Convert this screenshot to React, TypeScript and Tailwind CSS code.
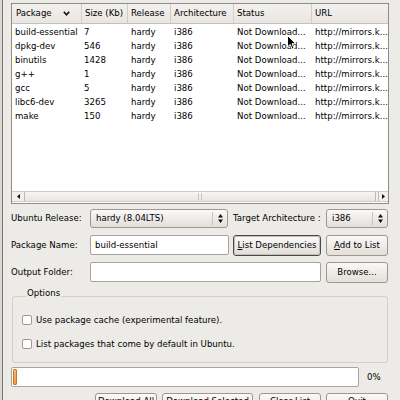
import React from "react";

const colW = ["w-[69px]", "w-[46px]", "w-[43px]", "w-[63px]", "w-[78px]", "w-[77px]"];
const headers = ["Package", "Size (Kb)", "Release", "Architecture", "Status", "URL"];
const rows: [string, string][] = [
  ["build-essential", "7"],
  ["dpkg-dev", "546"],
  ["binutils", "1428"],
  ["g++", "1"],
  ["gcc", "5"],
  ["libc6-dev", "3265"],
  ["make", "150"],
];

const face =
  "shrink-0 rounded-[3px] border border-[#9c978f] bg-linear-to-b from-[#fbfaf9] to-[#e2ded9] text-black";
const btn = `${face} flex items-center justify-center whitespace-nowrap`;
const bottomBtn = `${face} flex items-start justify-center whitespace-nowrap pt-[2px] h-[23px]`;

function UpDown() {
  return (
    <svg width="5" height="9" viewBox="0 0 5 9">
      <polygon points="2.5,0 5,3.5 0,3.5" fill="#111" />
      <polygon points="0,5.5 5,5.5 2.5,9" fill="#111" />
    </svg>
  );
}

function Combo({ text, w }: { text: string; w: string }) {
  return (
    <div className={`${face} ${w} flex h-[19px] items-center pl-[5px]`}>
      <span className="flex-1 whitespace-nowrap">{text}</span>
      <div className="flex h-full items-center">
        <div className="h-[13px] w-px bg-[#c8c4be]" />
        <div className="flex w-[14px] justify-center">
          <UpDown />
        </div>
      </div>
    </div>
  );
}

export default function App() {
  return (
    <div className="relative flex h-[400px] w-[400px] overflow-hidden bg-[#edebe8] font-['DejaVu_Sans',sans-serif] text-[8.6px] leading-[11px] text-black">
      <div className="w-[2px] shrink-0 bg-[#dcd9d4]" />
      <div className="w-px shrink-0 bg-[#77746f]" />
      <div className="flex w-[397px] shrink-0 flex-col pl-[8px] pr-[11px] pt-[3px]">
        {/* Tree view */}
        <div className="flex h-[201px] shrink-0 flex-col border border-[#8f8b85] bg-white">
          <div className="flex h-[20px] shrink-0 border-b border-[#c4c0ba] bg-linear-to-b from-[#f3f1ef] to-[#e8e5e1]">
            {headers.map((h, i) => (
              <div
                key={h}
                className={`${colW[i]} flex shrink-0 items-center ${i > 0 ? "border-l border-[#d0ccc6]" : ""} ${i === 0 ? "pl-[4px]" : "pl-[3px]"} overflow-hidden whitespace-nowrap`}
              >
                <span>{h}</span>
                {i === 0 && (
                  <svg className="ml-[11px]" width="7" height="5" viewBox="0 0 7 5">
                    <polyline points="0.8,0.8 3.5,3.8 6.2,0.8" fill="none" stroke="#111" strokeWidth="1.6" />
                  </svg>
                )}
              </div>
            ))}
          </div>
          <div className="flex flex-col pt-[1px]">
            {rows.map(([p, s]) => (
              <div key={p} className="flex h-[14px] items-center leading-[14px]">
                <div className={`${colW[0]} shrink-0 overflow-hidden whitespace-nowrap pl-[3px]`}>{p}</div>
                <div className={`${colW[1]} shrink-0 pl-[3px]`}>{s}</div>
                <div className={`${colW[2]} shrink-0 pl-[4px]`}>hardy</div>
                <div className={`${colW[3]} shrink-0 pl-[4px]`}>i386</div>
                <div className={`${colW[4]} shrink-0 overflow-hidden whitespace-nowrap pl-[4px]`}>Not Download...</div>
                <div className={`${colW[5]} shrink-0 overflow-hidden whitespace-nowrap pl-[4px]`}>http://mirrors.k...</div>
              </div>
            ))}
          </div>
          <div className="flex-1" />
          {/* horizontal scrollbar */}
          <div className="mb-[1px] flex h-[11px] shrink-0 border-y border-[#cfcbc5] bg-[#e6e3df]">
            <div className="flex w-[13px] items-center justify-center border-r border-[#bdb9b3] bg-[#f2f0ee]">
              <svg width="3" height="5" viewBox="0 0 3 5">
                <polygon points="3,0 3,5 0,2.5" fill="#111" />
              </svg>
            </div>
            <div className="flex flex-1 items-center justify-center border-r border-[#bdb9b3] bg-linear-to-b from-[#f6f5f3] to-[#e9e6e2]">
              <div className="flex gap-[2px]">
                <div className="h-[7px] w-px bg-[#c9c5bf]" />
                <div className="h-[7px] w-px bg-[#c9c5bf]" />
              </div>
            </div>
            <div className="w-[3px] border-r border-[#bdb9b3] bg-[#f2f0ee]" />
            <div className="flex w-[9px] items-center justify-center bg-[#f2f0ee]">
              <svg width="3" height="5" viewBox="0 0 3 5">
                <polygon points="0,0 3,2.5 0,5" fill="#111" />
              </svg>
            </div>
          </div>
        </div>

        {/* Ubuntu release row */}
        <div className="mt-[5px] flex h-[19px] shrink-0 items-center">
          <div className="w-[79px] shrink-0 whitespace-nowrap">Ubuntu Release:</div>
          <Combo text="hardy (8.04LTS)" w="w-[138px]" />
          <div className="ml-[5px] w-[93px] shrink-0 whitespace-nowrap">Target Architecture :</div>
          <Combo text="i386" w="w-[62px]" />
        </div>

        {/* Package name row */}
        <div className="mt-[7px] flex h-[21px] shrink-0 items-center">
          <div className="w-[79px] shrink-0 whitespace-nowrap">Package Name:</div>
          <div className="flex h-[20px] w-[139px] shrink-0 items-center self-start rounded-[2px] border border-[#a7a39c] bg-white pl-[4px]">
            build-essential
          </div>
          <div className="ml-[4px] h-[21px] w-[88px] shrink-0 rounded-[3px] border border-[#4a4844]">
            <div className={`${btn} h-full w-full border-[#c4c0b9]`}>
              <span>
                <span className="underline">L</span>ist Dependencies
              </span>
            </div>
          </div>
          <div className={`${btn} ml-[5px] h-[21px] w-[62px]`}>
            <span>
              <span className="underline">A</span>dd to List
            </span>
          </div>
        </div>

        {/* Output folder row */}
        <div className="mt-[6px] flex h-[21px] shrink-0 items-center">
          <div className="w-[79px] shrink-0 whitespace-nowrap">Output Folder:</div>
          <div className="h-[20px] w-[231px] shrink-0 self-start rounded-[2px] border border-[#a7a39c] bg-white" />
          <div className={`${btn} ml-[5px] h-[21px] w-[62px]`}>Browse...</div>
        </div>

        {/* Options frame */}
        <fieldset className="mx-[1px] mt-[5px] shrink-0 rounded-[3px] border border-[#d3cfc9] pb-[11px] pl-[9px]">
          <legend className="ml-[4px] px-[1px] pb-[6px] leading-[11px]">Options</legend>
          <div className="mt-[8px] flex h-[14px] items-center">
            <div className="h-[10px] w-[10px] shrink-0 rounded-[2px] border border-[#9d9992] bg-white" />
            <span className="ml-[4px] whitespace-nowrap">Use package cache (experimental feature).</span>
          </div>
          <div className="mt-[10px] flex h-[14px] items-center">
            <div className="h-[10px] w-[10px] shrink-0 rounded-[2px] border border-[#9d9992] bg-white" />
            <span className="ml-[4px] whitespace-nowrap">List packages that come by default in Ubuntu.</span>
          </div>
        </fieldset>

        {/* Progress */}
        <div className="mt-[4px] flex h-[20px] shrink-0 items-center">
          <div className="flex h-[20px] w-[348px] shrink-0 rounded-[2px] border border-[#aaa69f] bg-white p-[1px]">
            <div className="h-full w-[4px] rounded-[1px] border border-[#c9782a] bg-linear-to-b from-[#f8bb6f] to-[#ef9a3c]" />
          </div>
          <div className="ml-[8px]">0%</div>
        </div>

        {/* Bottom buttons */}
        <div className="mt-[6px] flex h-[23px] shrink-0 justify-end pr-[1px]">
          <div className={`${bottomBtn} w-[62px]`}>Download All</div>
          <div className={`${bottomBtn} ml-[5px] w-[91px]`}>Download Selected</div>
          <div className={`${bottomBtn} ml-[6px] w-[62px]`}>Clear List</div>
          <div className={`${bottomBtn} ml-[5px] w-[62px]`}>Quit</div>
        </div>
      </div>

      {/* mouse cursor */}
      <svg className="absolute left-[287px] top-[35px]" width="10" height="15" viewBox="0 0 10 15">
        <polygon points="0.5,0.5 0.5,12 3.2,9.5 5.2,14 7,13.2 5,8.8 8.8,8.8" fill="#000" stroke="#fff" strokeWidth="1" />
      </svg>
    </div>
  );
}
